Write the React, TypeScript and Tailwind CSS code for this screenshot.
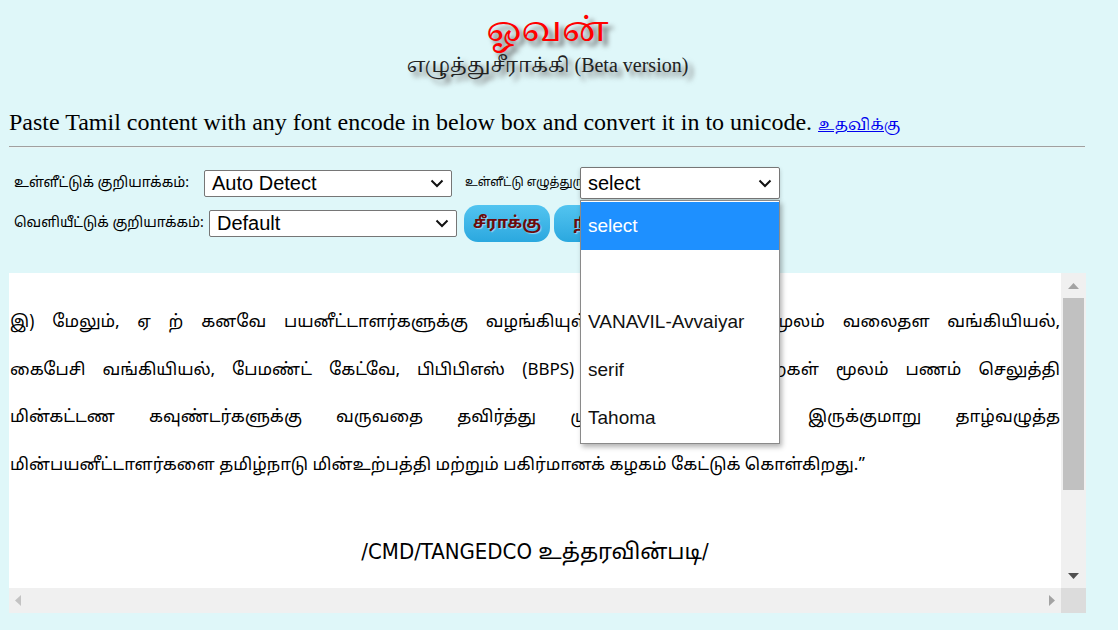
import React from "react";

const Chevron = () => (
  <svg width="14" height="9" viewBox="0 0 14 9" className="shrink-0">
    <path d="M1.5 1.5 L7 7 L12.5 1.5" fill="none" stroke="#111" strokeWidth="2" />
  </svg>
);

const tamilSans = { fontFamily: '"Noto Sans Tamil", "Lohit Tamil", "Noto Sans", "DejaVu Sans", sans-serif' };

export default function App() {
  return (
    <div className="relative w-[1118px] h-[630px] overflow-hidden bg-[#dff7f9] text-black" style={{ fontFamily: '"Liberation Serif", "Noto Serif Tamil", "Noto Sans Tamil", serif' }}>
      <div className="ml-[9px] w-[1077px] pt-[8px]">
        {/* header */}
        <div className="text-center text-[35px] leading-[44px] font-normal text-[#ff0000] [text-shadow:5px_5px_5px_#666]">ஓவன்</div>
        <div className="text-center text-[20px] leading-[26px] text-[#222] [text-shadow:5px_5px_5px_#777]">எழுத்துசீராக்கி (Beta version)</div>

        <p className="mt-[30px] text-[24px] leading-[28px] whitespace-nowrap">
          Paste Tamil content with any font encode in below box and convert it in to unicode.{" "}
          <a href="#" className="text-[16px] text-[#0000ee] underline">உதவிக்கு</a>
        </p>

        <div className="mt-[7px] h-px bg-[#a0a0a0] w-[1076px]" />
        <div className="h-px bg-[#e8f5f5] w-[1076px]" />

        {/* row 1 */}
        <div className="mt-[19px] h-[32px] flex items-center pl-[5px]" style={tamilSans}>
          <span className="text-[14px] w-[190px] whitespace-nowrap">உள்ளீட்டுக் குறியாக்கம்:</span>
          <div className="w-[248px] h-[27px] bg-white border border-[#767676] rounded-[2px] flex items-center justify-between pl-[7px] pr-[7px]">
            <span className="text-[20px] leading-[23px]" style={{ fontFamily: '"Liberation Sans", Arial, sans-serif' }}>Auto Detect</span>
            <Chevron />
          </div>
          <span className="ml-[13px] text-[12px] w-[115px] overflow-hidden whitespace-nowrap">உள்ளீட்டு எழுத்துரு:</span>
          <div className="w-[200px] h-[32px] bg-white border border-[#767676] rounded-[2px] flex items-center justify-between pl-[7px] pr-[7px] shadow-[0_2px_4px_rgba(0,0,0,0.2)]">
            <span className="text-[20px] leading-[23px]" style={{ fontFamily: '"Liberation Sans", Arial, sans-serif' }}>select</span>
            <Chevron />
          </div>
        </div>

        {/* row 2 */}
        <div className="mt-[6px] h-[37px] flex items-center pl-[5px]" style={tamilSans}>
          <span className="text-[14px] w-[195px] whitespace-nowrap">வெளியீட்டுக் குறியாக்கம்:</span>
          <div className="w-[248px] h-[27px] bg-white border border-[#767676] rounded-[2px] flex items-center justify-between pl-[7px] pr-[7px]">
            <span className="text-[20px] leading-[23px]" style={{ fontFamily: '"Liberation Sans", Arial, sans-serif' }}>Default</span>
            <Chevron />
          </div>
          <button className="ml-[7px] w-[86px] h-[37px] rounded-[14px] bg-gradient-to-b from-[#52c4f0] to-[#2aa8df] text-[#6e0a0a] font-bold text-[16px] [text-shadow:1px_1px_1px_rgba(255,255,255,0.5)]">சீராக்கு</button>
          <button className="ml-[4px] w-[86px] h-[37px] rounded-[14px] bg-gradient-to-b from-[#52c4f0] to-[#2aa8df] text-[#6e0a0a] font-bold text-[16px] [text-shadow:1px_1px_1px_rgba(255,255,255,0.5)]">நீக்கு</button>
        </div>

        {/* textarea */}
        <div className="mt-[31px] w-[1077px] h-[340px] bg-white flex flex-col">
          <div className="flex flex-1 min-h-0">
            <div className="flex-1 overflow-hidden pt-[26px] pl-[1px] pr-[1px] text-[17px] leading-[47.6px] text-black" style={{ fontFamily: '"Noto Sans Tamil", "Lohit Tamil", "Liberation Sans", sans-serif', fontStretch: "condensed" }}>
              <div className="whitespace-nowrap text-justify [text-align-last:justify]">இ) மேலும், ஏ ற் கனவே பயனீட்டாளர்களுக்கு வழங்கியுள்ள இணையதளம் மூலம் வலைதள வங்கியியல்,</div>
              <div className="whitespace-nowrap text-justify [text-align-last:justify]">கைபேசி வங்கியியல், பேமண்ட் கேட்வே, பிபிபிஎஸ் (BBPS) மற்றும் இதர முறைகள் மூலம் பணம் செலுத்தி</div>
              <div className="whitespace-nowrap text-justify [text-align-last:justify]">மின்கட்டண கவுண்டர்களுக்கு வருவதை தவிர்த்து முன்னெச்சரிக்கையாக இருக்குமாறு தாழ்வழுத்த</div>
              <div className="whitespace-nowrap">மின்பயனீட்டாளர்களை தமிழ்நாடு மின்உற்பத்தி மற்றும் பகிர்மானக் கழகம் கேட்டுக் கொள்கிறது.”</div>
              <div className="mt-[39px] text-center text-[22px] whitespace-nowrap" style={{ fontFamily: '"DejaVu Sans Condensed", "Liberation Sans Narrow", "Noto Sans Tamil", sans-serif', fontStretch: "condensed" }}>/CMD/TANGEDCO உத்தரவின்படி/</div>
            </div>
            {/* vertical scrollbar */}
            <div className="w-[25px] bg-[#f0f0f0] flex flex-col items-center">
              <div className="h-[25px] flex items-center justify-center">
                <svg width="11" height="6" viewBox="0 0 11 6"><path d="M0 6 L5.5 0 L11 6 Z" fill="#a3a3a3" /></svg>
              </div>
              <div className="w-[21px] h-[192px] bg-[#c1c1c1]" />
              <div className="flex-1" />
              <div className="h-[25px] flex items-center justify-center">
                <svg width="11" height="6" viewBox="0 0 11 6"><path d="M0 0 L11 0 L5.5 6 Z" fill="#505050" /></svg>
              </div>
            </div>
          </div>
          {/* horizontal scrollbar */}
          <div className="h-[25px] flex">
            <div className="flex-1 bg-[#f0f0f0] flex items-center justify-between px-[6px]">
              <svg width="6" height="11" viewBox="0 0 6 11"><path d="M6 0 L0 5.5 L6 11 Z" fill="#c3c3c3" /></svg>
              <svg width="6" height="11" viewBox="0 0 6 11"><path d="M0 0 L6 5.5 L0 11 Z" fill="#a3a3a3" /></svg>
            </div>
            <div className="w-[25px] bg-[#dcdcdc]" />
          </div>
        </div>
      </div>

      {/* open dropdown list */}
      <div className="absolute left-[580px] top-[200px] w-[200px] h-[244px] bg-white border border-[#8a8a8a] shadow-[2px_3px_5px_rgba(0,0,0,0.3)] text-[19px]" style={{ fontFamily: '"Liberation Sans", Arial, sans-serif' }}>
        <div className="mt-[1px] h-[48px] bg-[#1e90ff] text-white flex items-center pl-[7px]">select</div>
        <div className="h-[48px]" />
        <div className="h-[48px] flex items-center pl-[7px] text-[#111]">VANAVIL-Avvaiyar</div>
        <div className="h-[48px] flex items-center pl-[7px] text-[#111]">serif</div>
        <div className="h-[48px] flex items-center pl-[7px] text-[#111]">Tahoma</div>
      </div>
    </div>
  );
}
